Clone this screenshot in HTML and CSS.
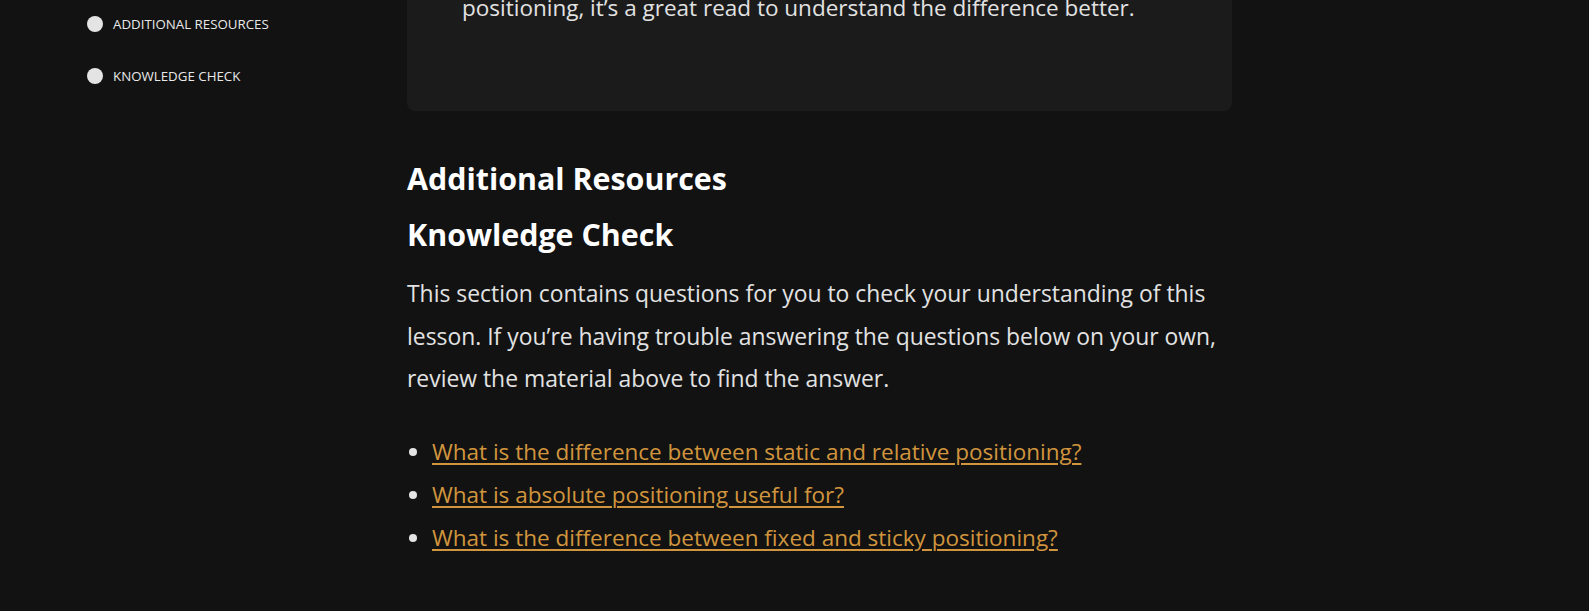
FILE: index.html
```html
<!DOCTYPE html>
<html lang="en">
<head>
<meta charset="utf-8">
<title>Positioning – Knowledge Check</title>
<link rel="stylesheet" href="styles.css">
</head>
<body>
<div class="layout">
  <nav class="sidebar">
    <ul class="toc">
      <li class="toc-item"><span class="toc-dot"></span><span class="toc-label">Additional Resources</span></li>
      <li class="toc-item"><span class="toc-dot"></span><span class="toc-label">Knowledge Check</span></li>
    </ul>
  </nav>
  <main class="content">
    <div class="note">
      <p class="note-text">positioning, it’s a great read to understand the difference better.</p>
    </div>
    <h3 class="heading heading-first">Additional Resources</h3>
    <h3 class="heading">Knowledge Check</h3>
    <p class="para">This section contains questions for you to check your understanding of this lesson. If you’re having trouble answering the questions below on your own, review the material above to find the answer.</p>
    <ul class="questions">
      <li class="question"><a class="q-link" href="#static-relative">What is the difference between static and relative positioning?</a></li>
      <li class="question"><a class="q-link" href="#absolute">What is absolute positioning useful for?</a></li>
      <li class="question"><a class="q-link" href="#fixed-sticky">What is the difference between fixed and sticky positioning?</a></li>
    </ul>
  </main>
</div>
</body>
</html>
```

FILE: styles.css
```css
html, body {
  margin: 0;
  padding: 0;
}

body {
  background: #121212;
  color: #e2e2e2;
  font-family: "Open Sans", "Noto Sans", sans-serif;
  overflow: hidden;
  height: 611px;
}

.layout {
  display: flex;
  align-items: flex-start;
  padding-left: 87px;
}

.sidebar {
  width: 320px;
  flex: none;
}

.toc {
  list-style: none;
  margin: 0;
  padding: 16px 0 0 0;
  display: flex;
  flex-direction: column;
  gap: 36px;
}

.toc-item {
  display: flex;
  align-items: center;
  gap: 10px;
  height: 16px;
}

.toc-dot {
  width: 16px;
  height: 16px;
  border-radius: 50%;
  background: #e4e4e4;
  flex: none;
}

.toc-label {
  font-size: 13.3px;
  line-height: 16px;
  text-transform: uppercase;
  color: #e8e8e8;
}

.content {
  width: 825px;
  flex: none;
  display: flex;
  flex-direction: column;
}

.note {
  background: #1b1b1b;
  border-radius: 8px;
  margin-top: -40px;
  padding: 27px 32px 81px 55px;
}

.note-text {
  margin: 0;
  font-size: 22.5px;
  line-height: 42.67px;
  color: #e2e2e2;
}

.heading {
  margin: 13.5px 0 0 0;
  font-size: 30.4px;
  line-height: 42.67px;
  font-weight: 700;
  color: #ffffff;
}

.heading-first {
  margin-top: 47.5px;
}

.para {
  margin: 16px 0 0 0;
  font-size: 22.9px;
  line-height: 42.67px;
  color: #e2e2e2;
}

.questions {
  list-style: none;
  margin: 29px 0 0 0;
  padding: 0 0 0 2px;
}

.question {
  display: flex;
  align-items: center;
  gap: 15px;
  font-size: 22.5px;
  line-height: 43px;
}

.question::before {
  content: "";
  width: 8px;
  height: 8px;
  border-radius: 50%;
  background: #e4e4e4;
  flex: none;
}

.q-link {
  color: #d1953d;
  text-decoration: underline;
  text-decoration-thickness: 1.5px;
  text-underline-offset: 3px;
}
```
